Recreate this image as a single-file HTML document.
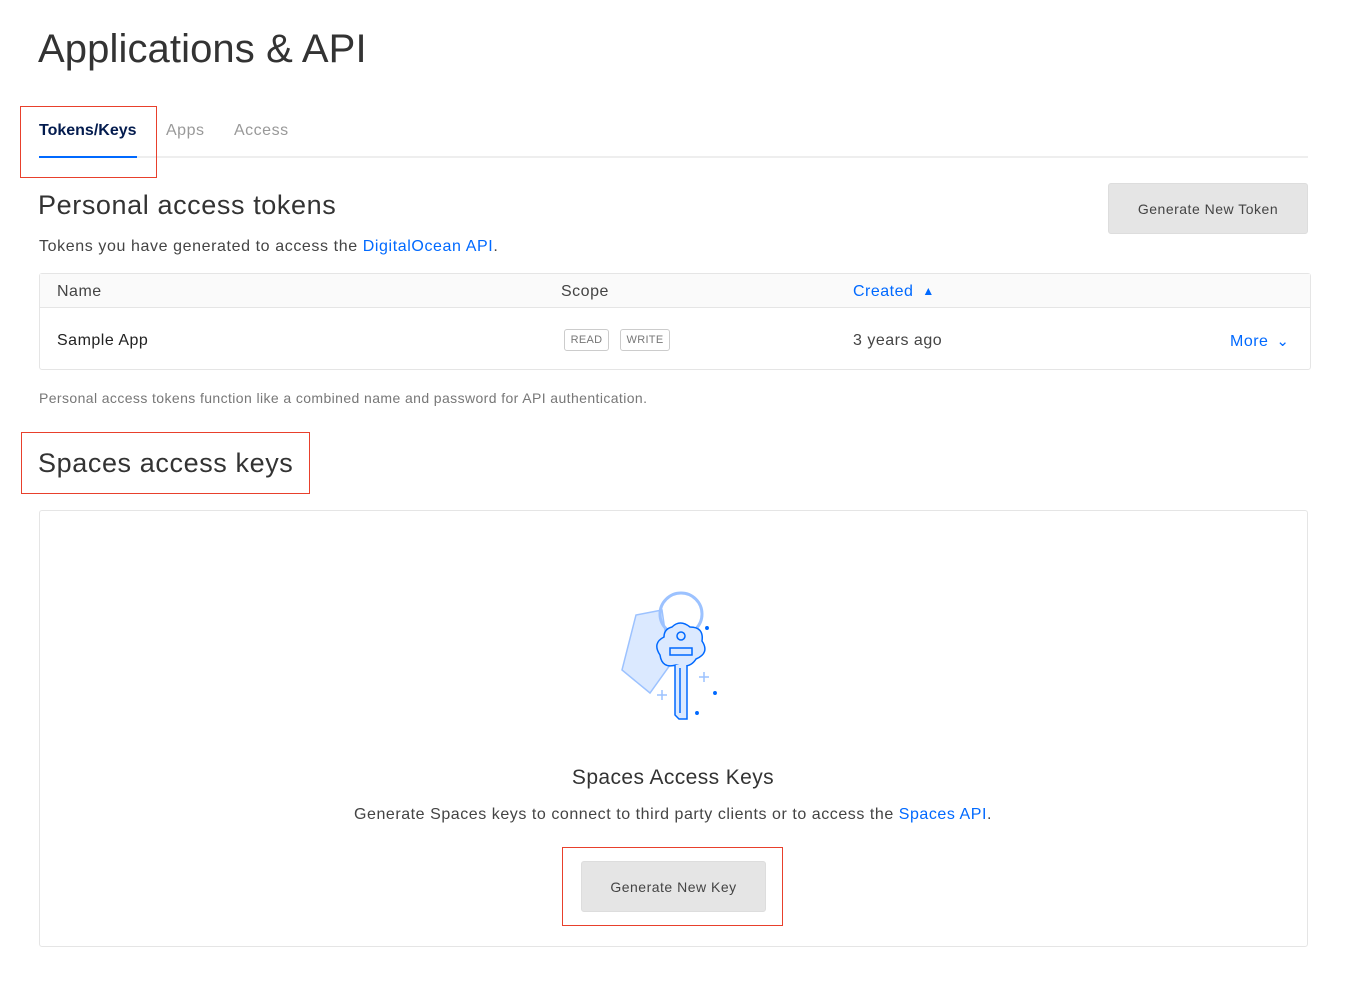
<!DOCTYPE html>
<html><head><meta charset="utf-8"><style>
*{box-sizing:border-box;margin:0;padding:0}
body{width:1358px;height:982px;background:#fff;font-family:"Liberation Sans",sans-serif;color:#333;position:relative;overflow:hidden;letter-spacing:0.5px}
.a{position:absolute}
a{color:#0069ff;text-decoration:none}
.red{position:absolute;border:1.5px solid #e8402c}
.btn{position:absolute;background:#e5e5e5;border:1px solid #ddd;border-radius:3px;font-size:14px;color:#444;display:flex;align-items:center;justify-content:center}
.badge{position:absolute;border:1px solid #ccc;border-radius:3px;font-size:11px;color:#777;height:22px;display:flex;align-items:center;justify-content:center;top:329px;letter-spacing:0.3px}
</style></head><body>
<div class="a" style="left:38px;top:27px;font-size:40px;color:#333;letter-spacing:0.1px">Applications &amp; API</div>
<div class="a" style="left:39px;top:122px;font-size:16px;color:#031b4e;font-weight:bold;letter-spacing:0">Tokens/Keys</div>
<div class="a" style="left:166px;top:122px;font-size:16px;color:#999">Apps</div>
<div class="a" style="left:234px;top:122px;font-size:16px;color:#999">Access</div>
<div class="a" style="left:39px;top:156px;width:1269px;height:2px;background:#eee"></div>
<div class="a" style="left:39px;top:156px;width:98px;height:2px;background:#0069ff"></div>
<div class="red" style="left:20px;top:106px;width:137px;height:72px"></div>
<div class="a" style="left:38px;top:190px;font-size:27px;color:#333;letter-spacing:0.6px">Personal access tokens</div>
<div class="btn" style="left:1108px;top:183px;width:200px;height:51px">Generate New Token</div>
<div class="a" style="left:39px;top:238px;font-size:16px;color:#444;letter-spacing:0.6px">Tokens you have generated to access the <a>DigitalOcean API</a>.</div>
<div class="a" style="left:39px;top:273px;width:1272px;height:97px;border:1px solid #e5e5e5;border-radius:3px"></div>
<div class="a" style="left:40px;top:274px;width:1270px;height:34px;background:#fafafa;border-bottom:1px solid #e5e5e5"></div>
<div class="a" style="left:57px;top:283px;font-size:16px;color:#444">Name</div>
<div class="a" style="left:561px;top:283px;font-size:16px;color:#444">Scope</div>
<div class="a" style="left:853px;top:283px;font-size:16px;color:#0069ff">Created <span style="font-size:12px;vertical-align:1px;margin-left:4px">▲</span></div>
<div class="a" style="left:57px;top:332px;font-size:16px;color:#222">Sample App</div>
<div class="badge" style="left:564px;width:45px">READ</div>
<div class="badge" style="left:620px;width:50px">WRITE</div>
<div class="a" style="left:853px;top:332px;font-size:16px;color:#444">3 years ago</div>
<div class="a" style="left:1230px;top:332px;font-size:16px;color:#0069ff">More <span style="font-size:15px;margin-left:3px">⌄</span></div>
<div class="a" style="left:39px;top:390px;font-size:14px;color:#777;letter-spacing:0.4px">Personal access tokens function like a combined name and password for API authentication.</div>
<div class="a" style="left:38px;top:448px;font-size:27px;color:#333;letter-spacing:0.6px">Spaces access keys</div>
<div class="red" style="left:21px;top:432px;width:289px;height:62px"></div>
<div class="a" style="left:39px;top:510px;width:1269px;height:437px;border:1px solid #e5e5e5;border-radius:3px"></div>
<svg class="a" style="left:615px;top:590px" width="110" height="135" viewBox="615 590 110 135" fill="none" stroke="#0069ff" stroke-width="1.5">
<path d="M636 615 L622 670 L650 693 L670 665 L662 610 Z" fill="#dbe9ff" stroke="#9cc2ff"/>
<circle cx="681" cy="614" r="21" stroke="#9cc2ff" stroke-width="3"/>
<path d="M672 627 q8-8 18 0 q14 0 12 14 q8 12-6 18 q-6 10-20 6 q-14 4-16-10 q-8-12 4-18 q0-8 8-10z" fill="#dbe9ff"/>
<circle cx="681" cy="636" r="4"/>
<rect x="670" y="648" width="22" height="7"/>
<path d="M675 665 v50 l4 4 h8 v-54" fill="#dbe9ff"/>
<path d="M680 668 v45"/>
<circle cx="715" cy="693" r="1.2" fill="#0069ff"/><circle cx="697" cy="713" r="1.2" fill="#0069ff"/><circle cx="707" cy="628" r="1.2" fill="#0069ff"/>
<path d="M704 672 v10 M699 677 h10 M662 690 v10 M657 695 h10" stroke="#9cc2ff"/>
</svg>
<div class="a" style="left:0;width:1346px;top:766px;text-align:center;font-size:21px;color:#333;letter-spacing:0.4px">Spaces Access Keys</div>
<div class="a" style="left:0;width:1346px;top:806px;text-align:center;font-size:16px;color:#444;letter-spacing:0.55px">Generate Spaces keys to connect to third party clients or to access the <a>Spaces API</a>.</div>
<div class="btn" style="left:581px;top:861px;width:185px;height:51px">Generate New Key</div>
<div class="red" style="left:562px;top:847px;width:221px;height:79px"></div>
</body></html>
